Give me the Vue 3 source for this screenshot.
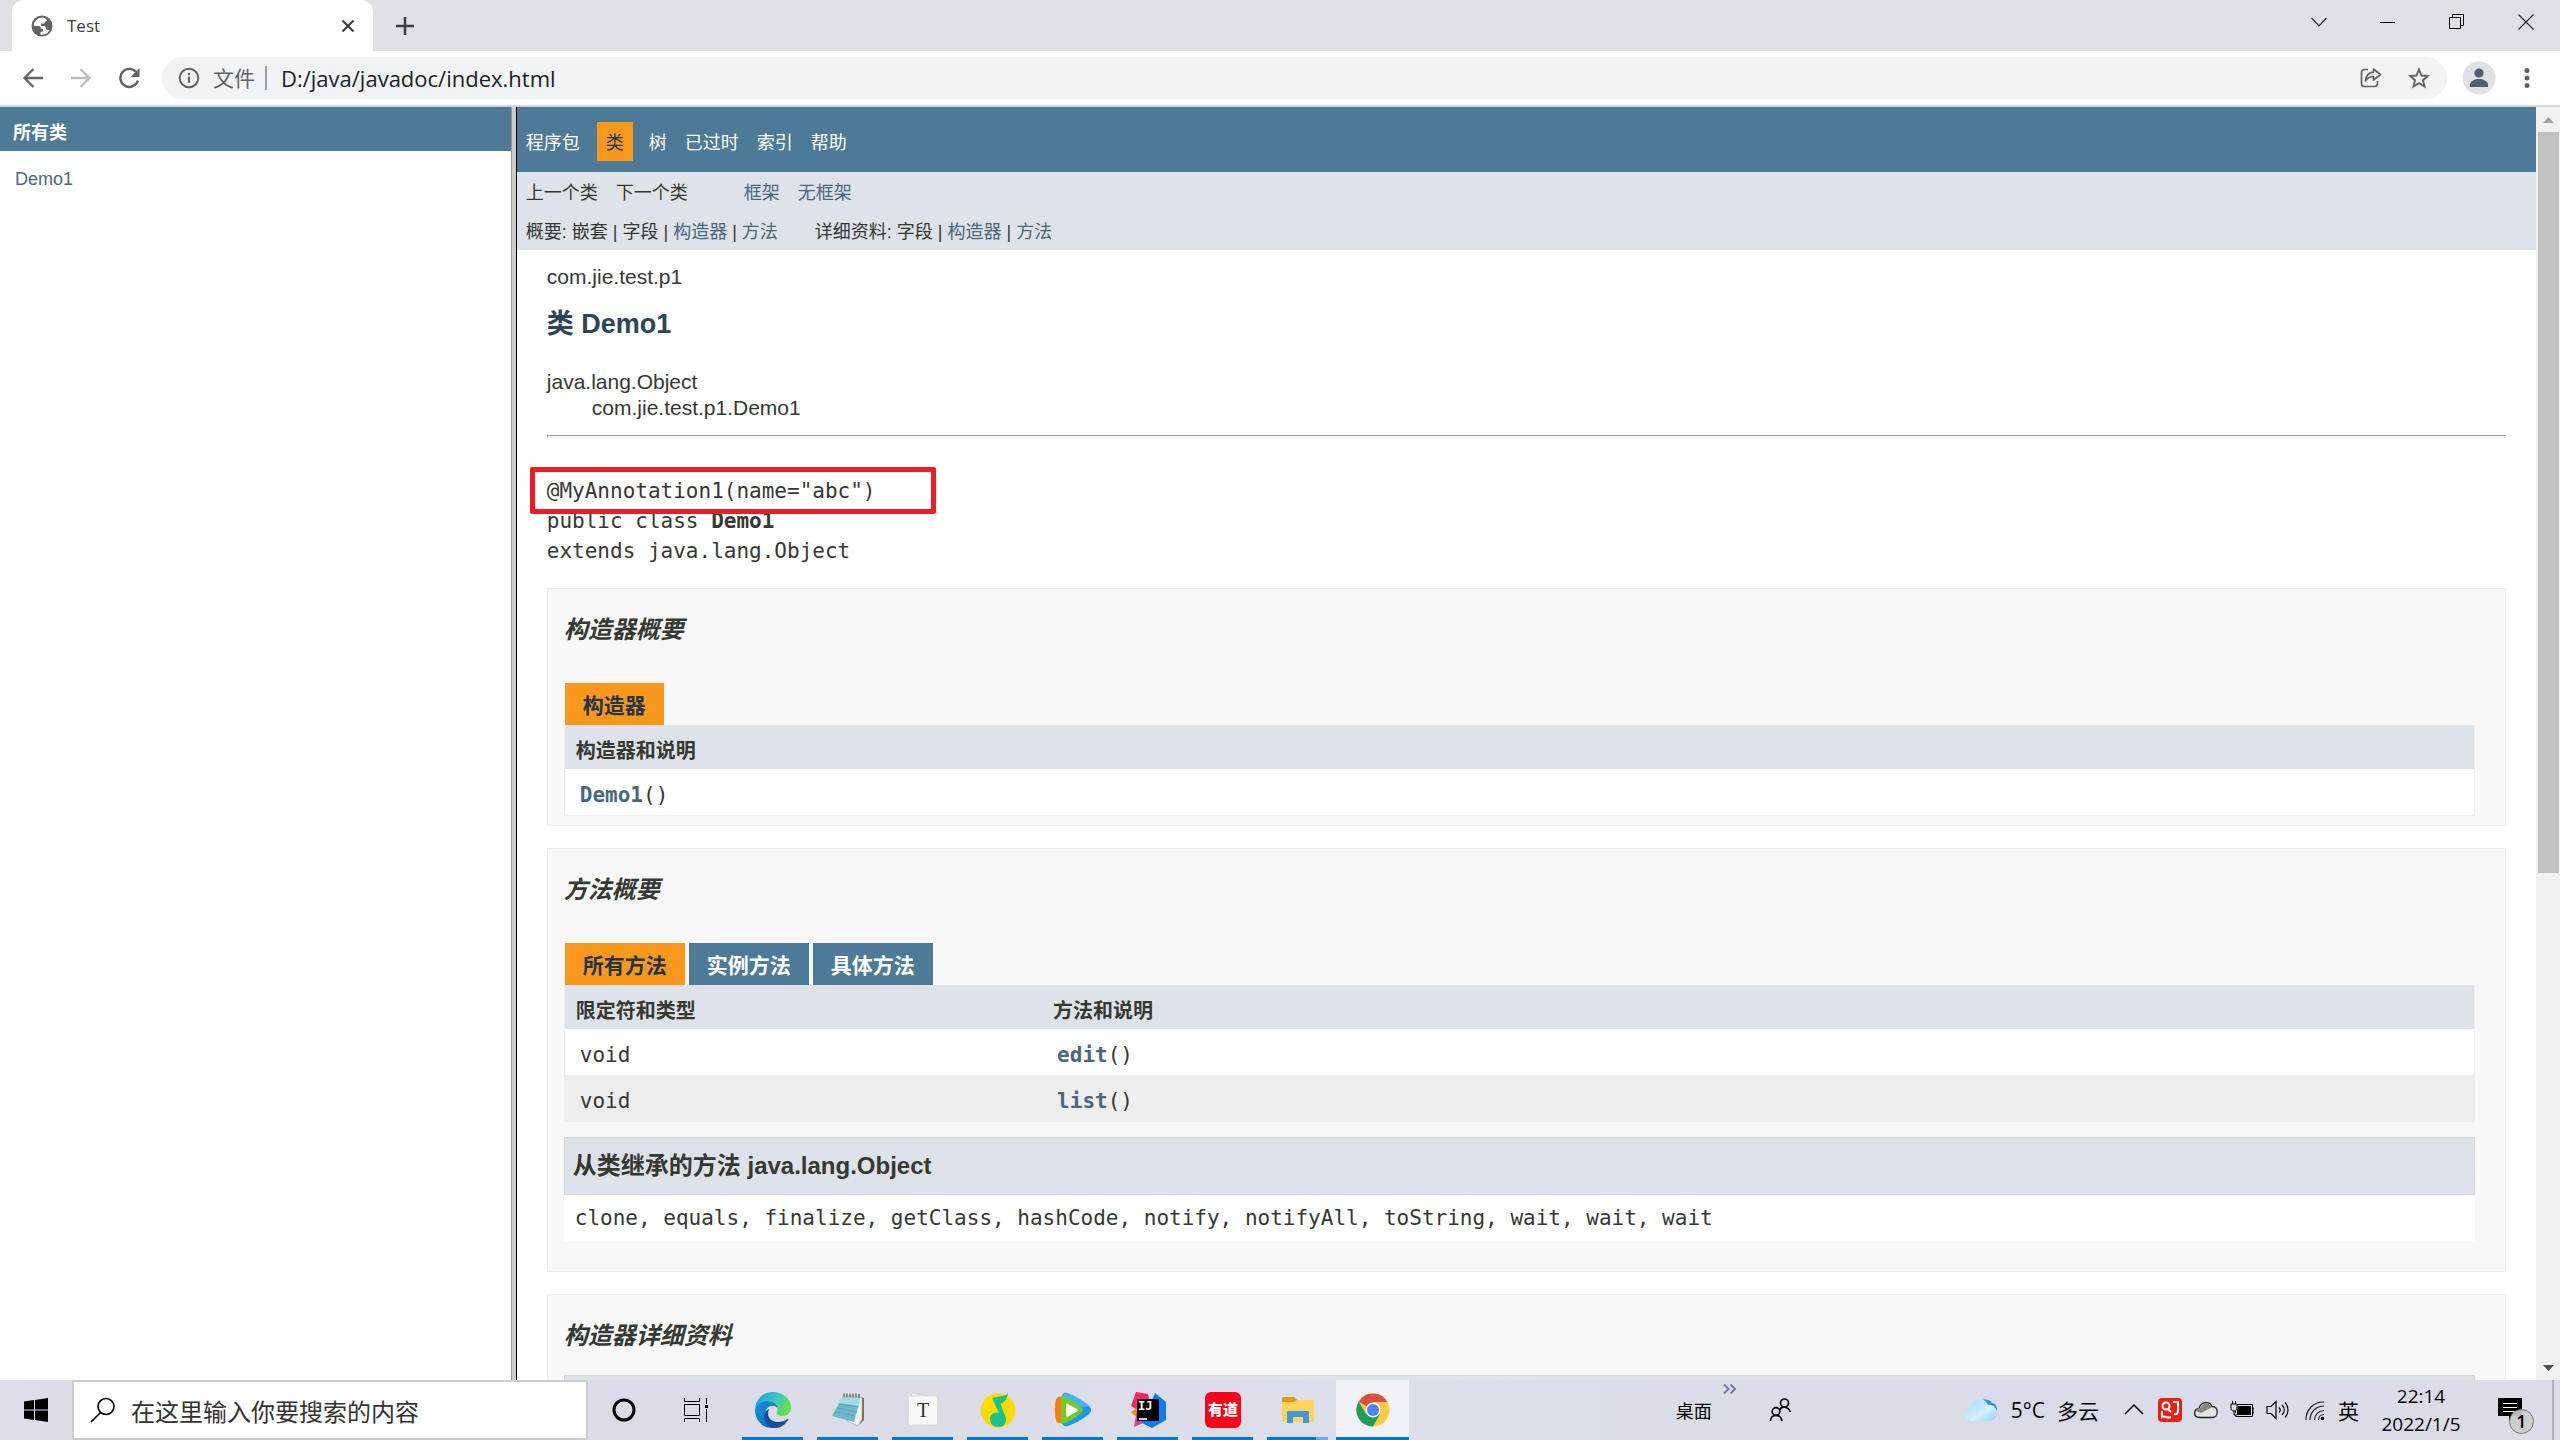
<template>
  <div class="screen">
    <header class="browser">
      <div class="tabstrip">
        <div class="tab">
          <svg width="22" height="22" viewBox="0 0 22 22">
            <circle cx="11" cy="11" r="10.5" fill="#5f6368" />
            <path d="M12 2.500c-5 0-9 3.500-9.300 8.200l4.800.3c1.500.2 2.500 1 2.500 2.500l2 .5v2.500l-2.500.5v2.500c4 .8 7.500-1 9-4.500-1.500.3-3-.2-3.500-1.500l-1-2.500H10V8.500h2.500c1 0 1.500-.8 1.500-1.800L16 5.500c-1-1.800-2.500-2.700-4-3z" fill="#fff" />
          </svg>
          <span class="tab-title">Test</span>
          <button class="icon-btn tab-close" aria-label="关闭">
            <svg width="14" height="14" viewBox="0 0 14 14"><path d="M1.500 1.500l11 11M12.500 1.500l-11 11" stroke="#3c4043" stroke-width="2.200" /></svg>
          </button>
        </div>
        <button class="icon-btn new-tab" aria-label="新标签页">
          <svg width="18" height="18" viewBox="0 0 18 18"><path d="M9 0v18M0 9h18" stroke="#3c4043" stroke-width="2.600" /></svg>
        </button>
        <div class="window-buttons">
          <button class="icon-btn" aria-label="搜索标签页">
            <svg width="16" height="16" viewBox="0 0 16 16"><path d="M.5 4l7.500 8 7.500-8" fill="none" stroke="#222" stroke-width="1.100" /></svg>
          </button>
          <button class="icon-btn" aria-label="最小化">
            <svg width="16" height="16" viewBox="0 0 16 16"><path d="M0 8.500h15" stroke="#000" /></svg>
          </button>
          <button class="icon-btn" aria-label="还原">
            <svg width="16" height="16" viewBox="0 0 16 16"><path d="M.5 3.500h11v11H.5zM3.500 3.500v-3h11v11h-3" fill="none" stroke="#000" /></svg>
          </button>
          <button class="icon-btn" aria-label="关闭窗口">
            <svg width="16" height="16" viewBox="0 0 16 16"><path d="M.5.5l15 15M15.500.5l-15 15" stroke="#222" stroke-width="1.100" /></svg>
          </button>
        </div>
      </div>

      <div class="toolbar">
        <button class="icon-btn nav-btn" aria-label="后退">
          <svg width="22" height="22" viewBox="0 0 22 22"><path d="M21 11H2.500M11.500 2L2.500 11l9 9" fill="none" stroke="#5f6368" stroke-width="2.300" /></svg>
        </button>
        <button class="icon-btn nav-btn" aria-label="前进" disabled>
          <svg width="22" height="22" viewBox="0 0 22 22"><path d="M1 11h18.500M10.500 2l9 9-9 9" fill="none" stroke="#babcbe" stroke-width="2.300" /></svg>
        </button>
        <button class="icon-btn nav-btn" aria-label="刷新">
          <svg width="22" height="22" viewBox="0 0 22 22">
            <path d="M18.200 5A9 9 0 1 0 20 13.500" fill="none" stroke="#5f6368" stroke-width="2.400" />
            <path d="M21.500 1v9h-9z" fill="#5f6368" />
          </svg>
        </button>
        <div class="omnibox">
          <svg width="22" height="22" viewBox="0 0 22 22">
            <circle cx="11" cy="11" r="9.300" fill="none" stroke="#5f6368" stroke-width="2" />
            <path d="M11 9.800v6M11 6v2.300" stroke="#5f6368" stroke-width="2.200" />
          </svg>
          <span class="scheme">文件</span>
          <input v-model="url" class="url" type="text" aria-label="地址栏" />
          <button class="icon-btn" aria-label="分享">
            <svg width="22" height="22" viewBox="0 0 22 22">
              <path d="M8 2.500H4.500a3 3 0 0 0-3 3v11a3 3 0 0 0 3 3h10a3 3 0 0 0 3-3V14" fill="none" stroke="#5f6368" stroke-width="1.700" />
              <path d="M5.500 14C6 8.500 9 5.500 13.500 5.200V2l7 5.500-7 5.500V9.500C10 9.500 7.500 11 5.500 14z" fill="none" stroke="#5f6368" stroke-width="1.700" stroke-linejoin="round" />
            </svg>
          </button>
          <button class="icon-btn" aria-label="收藏">
            <svg width="22" height="22" viewBox="0 0 22 22"><path d="M11 2.500l2.500 6 6.300.5-4.800 4.200 1.500 6.300-5.500-3.400-5.500 3.400L7 13.200 2.200 9l6.300-.5z" fill="none" stroke="#5f6368" stroke-width="1.900" /></svg>
          </button>
        </div>
        <button class="icon-btn avatar" aria-label="个人资料">
          <svg width="34" height="34" viewBox="0 0 34 34">
            <circle cx="17" cy="17" r="16.500" fill="#dee1e6" />
            <circle cx="17" cy="12" r="4.600" fill="#535e74" />
            <path d="M8 26v-2.500c0-3.500 5-5.500 9-5.500s9 2 9 5.500V26z" fill="#535e74" />
          </svg>
        </button>
        <button class="icon-btn menu" aria-label="菜单">
          <svg width="6" height="22" viewBox="0 0 6 22"><g fill="#5f6368"><circle cx="3" cy="3.500" r="2.500" /><circle cx="3" cy="11" r="2.500" /><circle cx="3" cy="18.500" r="2.500" /></g></svg>
        </button>
      </div>
    </header>

    <main class="frames">
      <aside class="frame-left">
        <h1 class="bar">所有类</h1>
        <ul>
          <li><a href="#demo1">Demo1</a></li>
        </ul>
      </aside>
      <div class="frame-border"></div>
      <div class="frame-right">
        <div class="doc">
          <nav class="top-nav">
            <template v-for="item in navItems" :key="item.text">
              <span v-if="item.active" class="nav-active">{{ item.text }}</span>
              <a v-else href="#">{{ item.text }}</a>
            </template>
          </nav>
          <div class="sub-nav">
            <div class="sub-row">
              <span>上一个类</span><span class="next">下一个类</span>
              <a href="#" class="frames-link">框架</a><a href="#" class="next">无框架</a>
            </div>
            <div class="sub-row">
              <span>概要:&nbsp;嵌套&nbsp;|&nbsp;字段&nbsp;|&nbsp;<a href="#summary">构造器</a>&nbsp;|&nbsp;<a href="#methods">方法</a></span>
              <span class="detail-links">详细资料:&nbsp;字段&nbsp;|&nbsp;<a href="#detail">构造器</a>&nbsp;|&nbsp;<a href="#detail">方法</a></span>
            </div>
          </div>

          <div class="content">
            <div class="package">com.jie.test.p1</div>
            <h2>类 Demo1</h2>
            <ul class="inheritance">
              <li>java.lang.Object</li>
              <li class="child">com.jie.test.p1.Demo1</li>
            </ul>
            <hr />
            <pre class="signature"><span class="annotation">@MyAnnotation1(name="abc")<i class="marker"></i></span>
public class <b>Demo1</b>
extends java.lang.Object</pre>

            <section id="summary">
              <h3>构造器概要</h3>
              <div class="tabs"><span class="doc-tab active">构造器</span></div>
              <table>
                <thead>
                  <tr><th>构造器和说明</th></tr>
                </thead>
                <tbody>
                  <tr><td><code><a href="#detail">Demo1</a>()</code></td></tr>
                </tbody>
              </table>
            </section>

            <section id="methods">
              <h3>方法概要</h3>
              <div class="tabs">
                <button
                  v-for="(tab, i) in methodTabs"
                  :key="tab"
                  class="doc-tab"
                  :class="{ active: i === activeTab }"
                  @click="activeTab = i"
                >{{ tab }}</button>
              </div>
              <table>
                <thead>
                  <tr><th class="col-first">限定符和类型</th><th>方法和说明</th></tr>
                </thead>
                <tbody>
                  <tr v-for="m in methods" :key="m.name">
                    <td><code>{{ m.type }}</code></td>
                    <td><code><a href="#detail">{{ m.name }}</a>()</code></td>
                  </tr>
                </tbody>
              </table>
              <div class="inherited">
                <h4>从类继承的方法&nbsp;java.lang.Object</h4>
                <code>{{ inherited.join(', ') }}</code>
              </div>
            </section>

            <section id="detail" class="detail">
              <h3>构造器详细资料</h3>
              <div class="detail-head"></div>
            </section>
          </div>
        </div>

        <div class="scrollbar">
          <svg width="24" height="25" viewBox="0 0 24 25"><path d="M7 16l5.500-6 5.500 6z" fill="#a3a3a3" /></svg>
          <div class="track"><div class="thumb"></div></div>
          <svg width="24" height="25" viewBox="0 0 24 25"><path d="M7 10l5.500 6 5.500-6z" fill="#505050" /></svg>
        </div>
      </div>
    </main>

    <footer class="taskbar">
      <button class="icon-btn slot" aria-label="开始">
        <svg width="24" height="24" viewBox="0 0 24 24"><path d="M0 3.500l10-1.400v9.400H0zM11 2l13-2v11.500H11zM0 12.500h10v9.400L0 20.500zM11 12.500h13V24l-13-2z" /></svg>
      </button>
      <label class="search">
        <svg width="26" height="26" viewBox="0 0 26 26"><circle cx="16" cy="9.500" r="8" fill="none" stroke="#000" stroke-width="1.700" /><path d="M10.500 15.500L1 25" stroke="#000" stroke-width="1.700" /></svg>
        <input type="text" placeholder="在这里输入你要搜索的内容" aria-label="搜索" />
      </label>
      <button class="icon-btn slot" aria-label="Cortana">
        <svg width="24" height="24" viewBox="0 0 24 24"><circle cx="12" cy="12" r="10" fill="none" stroke="#000" stroke-width="3" /></svg>
      </button>
      <button class="icon-btn slot" aria-label="任务视图">
        <svg width="24" height="24" viewBox="0 0 24 24">
          <path d="M.5 0v3.500h15V0M.5 6.500h15v11H.5zM.5 24v-3.500h15V24M22.500 0v6M22.500 11v13" fill="none" stroke="#000" />
          <path d="M21 7h3v3h-3z" />
        </svg>
      </button>

      <div class="apps">
        <button class="icon-btn app" aria-label="Edge">
          <svg width="36" height="36" viewBox="0 0 36 36">
            <defs>
              <linearGradient id="edge-top" x1="0" y1="0" x2="1" y2="0.500"><stop offset="0" stop-color="#1c9cd8" /><stop offset="0.500" stop-color="#31c3cf" /><stop offset="1" stop-color="#63e04f" /></linearGradient>
              <linearGradient id="edge-left" x1="0" y1="0" x2="1" y2="1"><stop offset="0" stop-color="#1795e0" /><stop offset="1" stop-color="#0a62b8" /></linearGradient>
            </defs>
            <path d="M0 17C1 7 8 0 18 0c10 0 18 7 18 15.500 0 5-3.500 8.500-8.500 8.500-4 0-6-1.500-6-3 0-1 1.200-1.500 1.200-4 0-4-4-8-10-8C6 9 2 12 0 17z" fill="url(#edge-top)" />
            <path d="M0 18C1 12 6 9 12 9c6 0 10.700 3.500 10.700 8-1-2-3-3.200-5-3.200-5 0-8 5-8 9.700 0 7 5 12 11.300 12C9 38 0 29 0 18z" fill="url(#edge-left)" />
            <path d="M14 17c-3 8 2 13 9 13 4 0 7-1 9.500-3 .8-.5 1.300 0 .8.800C30 33 25 36 21 36c-7 0-12-5.500-12-12 0-3 2-6 5-7z" fill="#10509b" />
          </svg>
        </button>
        <button class="icon-btn app" aria-label="记事本">
          <svg width="36" height="36" viewBox="0 0 36 36">
            <path d="M30 5l4 1v22l-5 5z" fill="#8b6a35" />
            <path d="M14 3l18 2v22l-4 7-11-5z" fill="#eef1ef" stroke="#9aa" stroke-width=".6" />
            <path d="M13 4h18l-7 26-22-6z" fill="#6bb8c9" />
            <path d="M13 4h18l-2.500 10-20-3z" fill="#a5dbe4" />
            <path d="M9 12l20 3M7 16l20 4M5 20l20 4" stroke="#4c9caf" stroke-width=".6" />
            <path d="M14 1.500v4M17 1.500v4M20 1.500v4M23 1.500v4M26 1.500v4M29 2v4" stroke="#666" stroke-width="1.300" />
          </svg>
        </button>
        <button class="icon-btn app" aria-label="Typora">
          <svg width="36" height="36" viewBox="0 0 36 36">
            <path d="M7 1l27 5-4 28-28-4z" fill="#eee" stroke="#ccc" stroke-width=".7" />
            <rect x="3.500" y="4" width="29" height="29" rx="2" fill="#f8f8f8" stroke="#d5d5d5" stroke-width=".7" />
            <text x="18" y="25" text-anchor="middle" font-family="Liberation Serif, serif" font-size="20" fill="#333">T</text>
          </svg>
        </button>
        <button class="icon-btn app" aria-label="QQ音乐">
          <svg width="36" height="36" viewBox="0 0 36 36">
            <circle cx="18" cy="18.500" r="17.300" fill="#ffdb00" />
            <path d="M28 1c-3 4-10 3-16 5l7 15c-5-2-9 2-9 6 0 5 4 8 8.500 8 5 0 8.500-4 7.500-9L20.500 12C24 10 27 8 28 1z" fill="#1cc28c" />
          </svg>
        </button>
        <button class="icon-btn app" aria-label="腾讯视频">
          <svg width="36" height="36" viewBox="0 0 36 36">
            <path d="M7 5c0-3 2-5 5-4 8 3 15 7 22 13 3 3 3 5 0 8-7 6-14 9-21 12-4 1-6-1-6-4z" fill="#1e95f5" />
            <path d="M8 5c0-3 2-4 4-4 8 3 15 7 22 13L8 18z" fill="#42b4fb" />
            <path d="M3 5l4-.5v27L3 31c-2-1-3-4-3-13S1 6 3 5z" fill="#ff7a14" />
            <path d="M6 7c0-2 2-3 4-2 7 3 12 6 17 11 1 1 1 3 0 4-5 5-10 8-17 11-2 1-4 0-4-2z" fill="#70cc1d" />
            <path d="M11 13c0-1 1-2 2-1l9 5c1 1 1 1.500 0 2.500l-9 5c-1 .5-2 0-2-1z" fill="#fff" />
          </svg>
        </button>
        <button class="icon-btn app" aria-label="IntelliJ IDEA">
          <svg width="36" height="36" viewBox="0 0 36 36">
            <path d="M6 0l12 2 2 10-9 8-10-6z" fill="#fb2360" />
            <path d="M1 20l6-4 3 9-5-1z" fill="#f98a23" />
            <path d="M7 18l13 10-16 7z" fill="#cf3f9e" />
            <path d="M25 1l11 9v18l-14 8-10-5z" fill="#087cfa" />
            <rect x="7" y="7" width="22" height="22" fill="#000" />
            <path d="M9 27h8" stroke="#fff" stroke-width="1.600" />
            <text x="8" y="18" font-family="DejaVu Sans Mono, monospace" font-weight="bold" font-size="12" fill="#fff">IJ</text>
          </svg>
        </button>
        <button class="icon-btn app" aria-label="有道">
          <svg width="36" height="36" viewBox="0 0 36 36">
            <rect width="36" height="36" rx="6" fill="#fc011a" />
            <text x="18" y="23" text-anchor="middle" font-family="Noto Sans CJK SC, sans-serif" font-weight="900" font-size="15" fill="#fff">有道</text>
          </svg>
        </button>
        <button class="icon-btn app folder" aria-label="文件资源管理器">
          <svg width="36" height="36" viewBox="0 0 36 36">
            <path d="M2 7c0-1 .5-2 2-2h10l3 3v5H2z" fill="#dc9d05" />
            <path d="M2 10h12l3-2h15c1.500 0 2 .5 2 2v18c0 1.500-.5 2-2 2H4c-1.500 0-2-.5-2-2z" fill="#ffd35c" />
            <path d="M7 31V21c0-1.500.5-2 2-2h18c1.500 0 2 .5 2 2v10h-6v-6H13v6z" fill="#3c97dc" />
          </svg>
        </button>
        <button class="icon-btn app current" aria-label="Chrome">
          <svg width="34" height="34" viewBox="0 0 34 34">
            <circle cx="17" cy="17" r="16.500" fill="#fdcc40" />
            <path d="M17 17L2.700 8.700A16.500 16.500 0 0 1 31.500 9H17z" fill="#d8503f" />
            <path d="M2.700 8.700A16.500 16.500 0 0 0 17 33.500l7-12.500-14 0z" fill="#1c9d58" />
            <circle cx="17" cy="17" r="7.500" fill="#fff" />
            <circle cx="17" cy="17" r="6" fill="#4a86f0" />
          </svg>
        </button>
      </div>

      <div class="desk">
        <span>桌面</span>
        <svg class="more" width="14" height="10" viewBox="0 0 14 10"><path d="M1 .5L5.500 5 1 9.500M7.500.5L12 5l-4.500 4.500" fill="none" stroke="#7676b0" stroke-width="2" /></svg>
        <svg class="people" width="24" height="24" viewBox="0 0 24 24">
          <g fill="none" stroke="#000" stroke-width="1.700"><circle cx="15.500" cy="5" r="4" /><circle cx="7" cy="13.500" r="3.800" /><path d="M11 12c1-4 8-4 10.500 2M1.500 23c0-7 10-8 11.500 0" /></g>
        </svg>
      </div>

      <div class="weather">
        <svg width="32" height="22" viewBox="0 0 32 22">
          <defs><linearGradient id="cloud" x1="0" y1="0" x2="1" y2="1"><stop offset="0" stop-color="#a3d9f8" /><stop offset="0.600" stop-color="#d3f0ff" /><stop offset="1" stop-color="#8fcdf2" /></linearGradient></defs>
          <path d="M16 2c4-3 10-1 11 2 3 0 5 3 5 7l-6 4z" fill="#3c8cdc" />
          <path d="M7 22a6.500 6.500 0 0 1-1-13C6-1 20-3 23 6c5-1 9 3 9 8s-4 8-8 8z" fill="url(#cloud)" />
        </svg>
        <span class="temp">5°C</span>
        <span>多云</span>
      </div>

      <div class="tray">
        <svg width="24" height="24" viewBox="0 0 24 24"><path d="M3 16l9-9 9 9" fill="none" stroke="#000" stroke-width="1.500" /></svg>
        <svg width="24" height="24" viewBox="0 0 24 24">
          <rect width="24" height="24" rx="4" fill="#e82117" />
          <g fill="none" stroke="#fff" stroke-width="2"><circle cx="8" cy="8" r="3.500" /><path d="M10 11l3 3M15 4h5v8c0 3-1 5-4 4M4 13v6c3-2 5 2 9 0" /></g>
        </svg>
        <svg width="24" height="24" viewBox="0 0 24 24">
          <path d="M6 19.500c-7 0-7-8-1-9C7 3 16 3 18 8.500c7 0 7 11 0 11z" fill="#e4e4e4" stroke="#222" stroke-width="1.300" />
          <path d="M1.500 13c1-3 3-3 5-3C9 4 15 4 17.500 9.500L7 15z" fill="#858585" />
        </svg>
        <svg width="24" height="24" viewBox="0 0 24 24">
          <path d="M5.500 6.500h17v12h-17zM22.500 10H24v5h-1.500" fill="none" stroke="#000" />
          <path d="M8 8h13v9H7v-4z" />
          <path d="M1 6h6v4c0 2-1 3-3 3s-3-1-3-3zM2.500 6V3M5.500 6V3M4 13v4h3" fill="#d9dbe7" stroke="#000" />
        </svg>
        <svg width="24" height="24" viewBox="0 0 24 24">
          <path d="M1 8.500h4l5-5v17l-5-5H1zM13 9.500c1.500 1.500 1.500 3.500 0 5M16 7c3 3 3 7 0 10M19 4.500c4 4 4 11 0 15" fill="none" stroke="#000" stroke-width="1.200" />
        </svg>
        <svg width="24" height="24" viewBox="0 0 24 24">
          <path d="M4 22C4 12 11 4 22 4M8 22c0-8 6-14 14-14M12.500 22c0-5 4-9.500 9.500-9.500M16.500 22c0-3 2-5.500 5.500-5.500" fill="none" stroke="#222" stroke-width="1.200" />
          <circle cx="20.500" cy="20.500" r="1.800" />
        </svg>
        <span class="ime">英</span>
      </div>
      <div class="clock">
        <span>22:14</span>
        <span>2022/1/5</span>
      </div>
      <button class="icon-btn notice" aria-label="通知">
        <svg width="36" height="36" viewBox="0 0 36 36">
          <path d="M0 0h24v18H15l-4 5v-5H0z" />
          <path d="M5 5.500h14M5 9.500h14M5 13.500h14" stroke="#fff" />
          <circle cx="23.500" cy="23.500" r="12" fill="#ccc" fill-opacity=".92" stroke="#777" />
          <text x="23.500" y="30" text-anchor="middle" font-family="Open Sans, sans-serif" font-weight="600" font-size="18">1</text>
        </svg>
      </button>
      <div class="show-desktop"></div>
    </footer>
  </div>
</template>

<script setup>
import { ref } from 'vue';

const url = ref('D:/java/javadoc/index.html');

const navItems = [
  { text: '程序包' },
  { text: '类', active: true },
  { text: '树' },
  { text: '已过时' },
  { text: '索引' },
  { text: '帮助' },
];

const methodTabs = ['所有方法', '实例方法', '具体方法'];
const activeTab = ref(0);

const methods = [
  { type: 'void', name: 'edit' },
  { type: 'void', name: 'list' },
];

const inherited = [
  'clone', 'equals', 'finalize', 'getClass', 'hashCode', 'notify',
  'notifyAll', 'toString', 'wait', 'wait', 'wait',
];
</script>

<style>
body {
  margin: 0;
}
</style>

<style scoped>
.screen {
  display: flex;
  flex-direction: column;
  height: 100vh;
  overflow: hidden;
  background: #fff;
  color: #353833;
  font-family: "Liberation Sans", "Noto Sans CJK SC", sans-serif;
}

.screen * {
  box-sizing: border-box;
}

svg {
  display: block;
  flex: none;
}

a {
  color: #4a6782;
  text-decoration: none;
}

ul {
  list-style: none;
  margin: 0;
  padding: 0;
}

.icon-btn {
  display: flex;
  align-items: center;
  justify-content: center;
  flex: none;
  padding: 0;
  border: 0;
  background: none;
}

/* browser chrome */
.browser {
  flex: none;
  border-bottom: 2px solid #d8d8d8;
  font-family: "Open Sans", "Noto Sans CJK SC", sans-serif;
}

.tabstrip {
  display: flex;
  align-items: center;
  height: 51px;
  padding-left: 12px;
  background: #dee1e6;
}

.tab {
  display: flex;
  align-items: center;
  width: 361px;
  height: 51px;
  padding: 0 18px 0 19px;
  border-radius: 12px 12px 0 0;
  background: #fff;
}

.tab-title {
  flex: 1;
  margin-left: 14px;
  font-size: 17px;
  color: #3c4043;
}

.new-tab {
  margin-left: 23px;
}

.window-buttons {
  display: flex;
  gap: 53px;
  margin-left: auto;
  padding: 0 26px 8px 0;
}

.toolbar {
  display: flex;
  align-items: center;
  height: 54px;
  padding: 0 30px 0 22px;
}

.nav-btn {
  margin-right: 26px;
}

.omnibox {
  display: flex;
  flex: 1;
  align-items: center;
  gap: 26px;
  height: 42px;
  margin-left: -4px;
  padding: 0 17px 0 16px;
  border-radius: 21px;
  background: #f1f3f4;
}

.scheme {
  margin-left: -13px;
  padding-right: 10px;
  border-right: 2px solid #9aa0a6;
  font-size: 21px;
  line-height: 24px;
  color: #5f6368;
}

.url {
  flex: 1;
  margin-left: -12px;
  padding: 0;
  border: 0;
  outline: 0;
  background: none;
  font-family: inherit;
  font-size: 22px;
  color: #202124;
}

.avatar {
  margin-left: 15px;
}

.menu {
  margin-left: 28px;
}

/* frameset */
.frames {
  display: grid;
  flex: 1;
  grid-template-columns: 1fr 6px 4fr;
  min-height: 0;
}

.frame-left .bar {
  margin: 0;
  padding: 8px 13px 0;
  background: #4d7a97;
  color: #fff;
  font-size: 18px;
  line-height: 36px;
}

.frame-left ul {
  padding: 13px 15px;
  font-size: 18px;
  line-height: 30px;
}

.frame-border {
  border-left: 1px solid #999;
  border-right: 1px solid #000;
  background: #ccc;
}

.frame-right {
  display: flex;
  min-width: 0;
  min-height: 0;
}

.doc {
  flex: 1;
  min-width: 0;
  overflow: hidden;
}

.top-nav {
  display: flex;
  gap: 18px;
  padding: 15px 9px 11px;
  background: #4d7a97;
  font-size: 18px;
  line-height: 36px;
}

.top-nav a {
  padding-top: 3px;
  color: #fff;
}

.nav-active {
  margin: 0 -2px 0 -1px;
  padding: 3px 9px 0;
  background: #f8981d;
  color: #253441;
}

.sub-nav {
  padding: 0 9px;
  background: #dee3e9;
  font-size: 18px;
  line-height: 36px;
}

.sub-row {
  display: flex;
  padding-top: 3px;
}

.next {
  margin-left: 18px;
}

.frames-link {
  margin-left: 56px;
}

.detail-links {
  margin-left: 37px;
}

.content {
  padding: 12px 30px;
  font-size: 21px;
}

.package {
  line-height: 30px;
}

h2 {
  margin: 14px 0 27px;
  color: #2c4557;
  font-size: 27px;
  line-height: 36px;
}

.inheritance {
  line-height: 26px;
}

.child {
  padding-left: 45px;
}

hr {
  height: 3px;
  margin: 14px 0 38px;
  border: 1px solid #eee;
  border-top-color: #9a9a9a;
  border-left-color: #9a9a9a;
}

pre,
code {
  font-family: "DejaVu Sans Mono", monospace;
  font-size: 21px;
}

.signature {
  margin: 0 0 22px;
  line-height: 30px;
}

.annotation {
  position: relative;
}

/* red frame drawn over the annotation line */
.marker {
  position: absolute;
  top: -12px;
  left: -17px;
  width: 406px;
  height: 47px;
  border: 5px solid #ee1c25;
  border-radius: 2px;
}

section {
  margin-bottom: 22px;
  padding: 26px 30px 9px 16px;
  border: 1px solid #ededed;
  background: #f8f8f8;
}

h3 {
  margin: 0 0 38px;
  font-size: 24px;
  font-style: italic;
  line-height: 30px;
}

.tabs {
  display: flex;
  gap: 4px;
  padding-left: 1px;
}

.doc-tab {
  padding: 3px 18px 0;
  border: 0;
  background: #4d7a97;
  color: #fff;
  font-family: inherit;
  font-size: 21px;
  font-weight: bold;
  line-height: 39px;
}

.doc-tab.active {
  background: #f8981d;
  color: #253441;
}

table {
  width: 100%;
  border: 1px solid #eee;
  border-top: 0;
  border-spacing: 0;
}

th {
  height: 44px;
  padding: 8px 11px 0;
  background: #dee3e9;
  font-size: 20px;
  line-height: 30px;
  text-align: left;
}

.col-first {
  width: 25%;
}

td {
  height: 46px;
  padding: 5px 15px 0;
  background: #fff;
  line-height: 30px;
}

tbody tr:nth-child(even) td {
  background: #eeeeef;
}

td a {
  font-weight: bold;
}

.inherited {
  margin: 15px 0 21px;
  background: #fff;
}

h4,
.detail-head {
  height: 58px;
  border: 1px solid #d0d9e0;
  background: #dee3e9;
}

h4 {
  margin: 0;
  padding: 0 8px;
  font-size: 24px;
  line-height: 56px;
}

.inherited code {
  display: block;
  padding: 0 11px;
  line-height: 46px;
}

.detail h3 {
  margin-bottom: 24px;
}

.scrollbar {
  display: flex;
  flex: none;
  flex-direction: column;
  width: 24px;
  background: #f1f1f1;
}

.track {
  flex: 1;
  padding: 0 1px 0 2px;
}

.thumb {
  height: 60.6%;
  background: #c1c1c1;
}

/* taskbar */
.taskbar {
  display: flex;
  flex: none;
  align-items: center;
  height: 60px;
  background: linear-gradient(90deg, #e0dce8, #d9dce8 20%, #dcdce7 35%, #dbe0e9 55%, #dadce8 75%, #d9dde9 85%, #dedbe7);
  color: #000;
  font-family: "Open Sans", "Noto Sans CJK SC", sans-serif;
}

.slot {
  width: 72px;
  height: 60px;
}

.search {
  display: flex;
  align-items: center;
  gap: 15px;
  width: 516px;
  height: 60px;
  padding: 0 16px;
  border: 2px solid #ccc;
  background: #fff;
}

.search input {
  flex: 1;
  min-width: 0;
  padding: 0;
  border: 0;
  outline: 0;
  background: none;
  font-family: "Noto Sans CJK SC", sans-serif;
  font-size: 24px;
}

.search input::placeholder {
  color: #333;
}

.apps {
  display: flex;
  gap: 2px;
  margin-left: 4px;
}

.app {
  position: relative;
  width: 73px;
  height: 60px;
}

.app::after {
  content: "";
  position: absolute;
  right: 6px;
  bottom: 0;
  left: 6px;
  height: 3px;
  background: #0078d7;
}

.folder::after {
  background: linear-gradient(90deg, #0078d7 80%, #66aee7 80%);
}

.current {
  background: #f1f2f7;
}

.current::after {
  right: 0;
  left: 0;
}

.desk {
  display: flex;
  align-items: center;
  margin-right: 172px;
  margin-left: auto;
  font-size: 18px;
}

.more {
  margin: 0 32px 42px 11px;
}

.weather {
  display: flex;
  align-items: center;
  margin-right: 23px;
  font-size: 21px;
}

.temp {
  margin: 0 12px 0 14px;
}

.tray {
  display: flex;
  align-items: center;
  gap: 12px;
}

.ime {
  font-size: 21px;
}

.clock {
  display: flex;
  flex-direction: column;
  align-items: center;
  width: 84px;
  margin: 0 35px 0 20px;
  font-size: 19px;
  line-height: 28px;
}

.notice {
  margin: 12px 18px 0 0;
}

.show-desktop {
  width: 8px;
  height: 60px;
  border-left: 2px solid #b1b0c0;
}
</style>
